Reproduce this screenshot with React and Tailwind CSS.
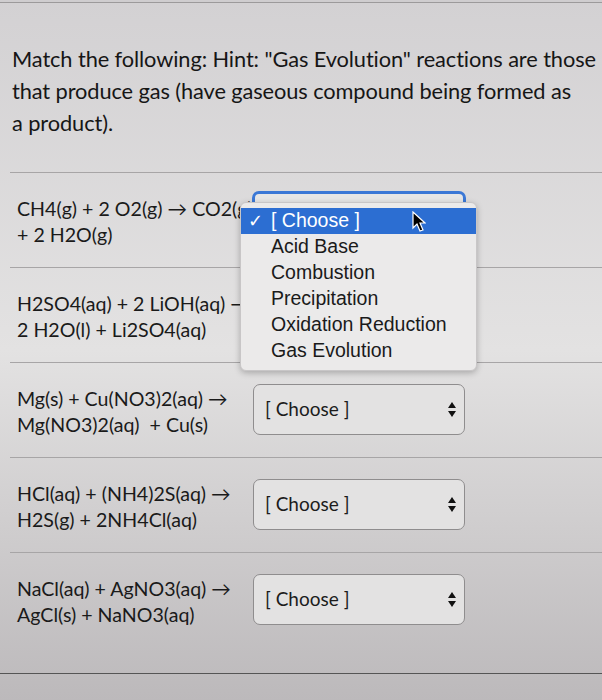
const rows = [
  { a: 'CH4(g) + 2 O2(g) → CO2(g)', b: '+ 2 H2O(g)' },
  { a: 'H2SO4(aq) + 2 LiOH(aq) →', b: '2 H2O(l) + Li2SO4(aq)' },
  { a: 'Mg(s) + Cu(NO3)2(aq) →', b: 'Mg(NO3)2(aq)  + Cu(s)' },
  { a: 'HCl(aq) + (NH4)2S(aq) →', b: 'H2S(g) + 2NH4Cl(aq)' },
  { a: 'NaCl(aq) + AgNO3(aq) →', b: 'AgCl(s) + NaNO3(aq)' },
];

const options = ['[ Choose ]', 'Acid Base', 'Combustion', 'Precipitation', 'Oxidation Reduction', 'Gas Evolution'];

function Arrows() {
  return (
    <svg width="8" height="15" viewBox="0 0 8 15" className="text-[#111]">
      <path d="M4 0 L8 6 L0 6 Z" fill="currentColor" />
      <path d="M0 9 L8 9 L4 15 Z" fill="currentColor" />
    </svg>
  );
}

function SelectBox({ focused }) {
  if (focused) {
    return (
      <div className="ml-[242px] mt-[18px] h-[51px] w-[214px] rounded-[7px] border-[3px] border-[#3b78d6] bg-[#e6e6e6]" />
    );
  }
  return (
    <div className="ml-[243px] mt-[21px] flex h-[51px] w-[212px] items-center justify-between rounded-[7px] border border-[#8f8d8e] bg-[#e3e2e2] pl-[11px] pr-[8px]">
      <span className="text-[19px] text-[#1c1c1c]">[ Choose ]</span>
      <Arrows />
    </div>
  );
}

function Row({ row, idx, last }) {
  return (
    <div className={`relative ml-[10px] border-t border-[#a7a5a6] ${last ? 'h-[121px]' : 'h-[95px]'}`}>
      <div className="flex">
        <div className="absolute left-[7px] top-[23px] text-[19.6px] leading-[26px] text-[#1a1a1a] whitespace-pre">
          <div>{row.a}</div>
          <div>{row.b}</div>
        </div>
        {idx !== 1 && <SelectBox focused={idx === 0} />}
      </div>
    </div>
  );
}

export default function App() {
  return (
    <div
      className="relative h-[700px] w-[602px] overflow-hidden bg-linear-to-b from-[#d3d1d3] via-[#e3e2e2] to-[#bcb9bb]"
      style={{ fontFamily: 'Lato, "Noto Sans", sans-serif' }}
    >
      <div className="h-[3px] border-b border-[#9c9a9b] bg-[#cfcdcf]" />
      <div className="pl-[12px] pt-[40px] pb-[33px] text-[21.8px] leading-[32px] tracking-[-0.1px] text-[#161616] whitespace-nowrap">
        Match the following: Hint: "Gas Evolution" reactions are those
        <br />
        that produce gas (have gaseous compound being formed as
        <br />a product).
      </div>
      {rows.map((r, i) => (
        <Row key={i} row={r} idx={i} last={i === rows.length - 1} />
      ))}
      <div className="border-t border-[#555]" />

      {/* open native select menu */}
      <div
        className="absolute left-[240px] top-[202px] w-[237px] rounded-[6px] border border-[#c8c6c7] bg-[#ebeaea] pt-[5px] pb-[6px] shadow-[0_2px_6px_rgba(0,0,0,0.25)]"
        style={{ fontFamily: '"Liberation Sans", Arial, sans-serif' }}
      >
        {options.map((o, i) => (
          <div
            key={o}
            className={`flex h-[26px] items-center text-[19.5px] ${i === 0 ? 'bg-[#2c6ed2] text-white' : 'text-[#1a1a1a]'}`}
          >
            <span className="w-[30px] pl-[7px] text-[18px]">{i === 0 ? '✓' : ''}</span>
            {o}
          </div>
        ))}
      </div>

      {/* mouse cursor */}
      <svg className="absolute left-[412px] top-[211px]" width="14" height="22" viewBox="0 0 14 22">
        <path d="M1 1 L1 17 L5 13 L8 20 L11 19 L8 12 L13 12 Z" fill="#000" stroke="#fff" strokeWidth="1.2" />
      </svg>
    </div>
  );
}
